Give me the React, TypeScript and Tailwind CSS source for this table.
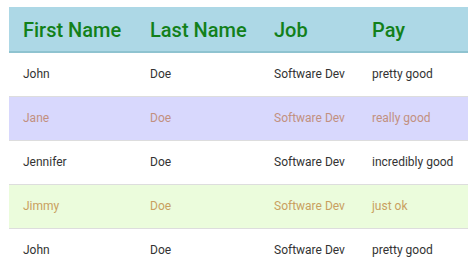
import React from 'react';

type Person = { first: string; last: string; job: string; pay: string };

const people: Person[] = [
  { first: 'John', last: 'Doe', job: 'Software Dev', pay: 'pretty good' },
  { first: 'Jane', last: 'Doe', job: 'Software Dev', pay: 'really good' },
  { first: 'Jennifer', last: 'Doe', job: 'Software Dev', pay: 'incredibly good' },
  { first: 'Jimmy', last: 'Doe', job: 'Software Dev', pay: 'just ok' },
  { first: 'John', last: 'Doe', job: 'Software Dev', pay: 'pretty good' },
];

// every 2nd row has its own colour, cycling lavender / green
const rowStyle = (i: number) => {
  if (i % 4 === 1) return 'bg-[#d8d8fd] text-[#c29080]';
  if (i % 4 === 3) return 'bg-[#ebfcdc] text-[#c9a060]';
  return 'bg-white text-[#333333]';
};

const App: React.FC = () => {
  return (
    <div className="min-h-screen bg-white pl-[9px] pt-[7px] font-['Roboto',sans-serif]">
      <table className="w-[459px] table-fixed border-collapse whitespace-nowrap text-left">
        <colgroup>
          <col className="w-[127px]" />
          <col className="w-[124px]" />
          <col className="w-[98px]" />
          <col />
        </colgroup>
        <thead>
          <tr className="h-[45px] border-b-2 border-[#8fc3d0] bg-[#add8e6]">
            {['First Name', 'Last Name', 'Job', 'Pay'].map(h => (
              <th key={h} className="px-[14px] pt-[1px] text-[20px] font-medium text-[#12801a]">
                {h}
              </th>
            ))}
          </tr>
        </thead>
        <tbody>
          {people.map((p, i) => (
            <tr key={i} className={`h-[44px] border-b border-[#dddddd] text-[12px] ${rowStyle(i)}`}>
              <td className="px-[14px]">{p.first}</td>
              <td className="px-[14px]">{p.last}</td>
              <td className="px-[14px]">{p.job}</td>
              <td className="px-[14px]">{p.pay}</td>
            </tr>
          ))}
        </tbody>
      </table>
    </div>
  );
};

export default App;
